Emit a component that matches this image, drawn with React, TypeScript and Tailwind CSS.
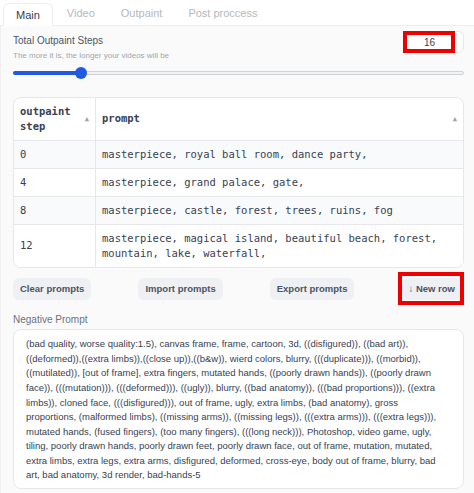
import React from 'react';

const rows: { step: string; prompt: string[] }[] = [
    { step: '0', prompt: ['masterpiece, royal ball room, dance party,'] },
    { step: '4', prompt: ['masterpiece, grand palace, gate,'] },
    { step: '8', prompt: ['masterpiece, castle, forest, trees, ruins, fog'] },
    {
        step: '12',
        prompt: ['masterpiece, magical island, beautiful beach, forest,', 'mountain, lake, waterfall,'],
    },
];

const negativeLines = [
    '(bad quality, worse quality:1.5), canvas frame, frame, cartoon, 3d, ((disfigured)), ((bad art)),',
    '((deformed)),((extra limbs)),((close up)),((b&w)), wierd colors, blurry, (((duplicate))), ((morbid)),',
    '((mutilated)), [out of frame], extra fingers, mutated hands, ((poorly drawn hands)), ((poorly drawn',
    'face)), (((mutation))), (((deformed))), ((ugly)), blurry, ((bad anatomy)), (((bad proportions))), ((extra',
    'limbs)), cloned face, (((disfigured))), out of frame, ugly, extra limbs, (bad anatomy), gross',
    'proportions, (malformed limbs), ((missing arms)), ((missing legs)), (((extra arms))), (((extra legs))),',
    'mutated hands, (fused fingers), (too many fingers), (((long neck))), Photoshop, video game, ugly,',
    'tiling, poorly drawn hands, poorly drawn feet, poorly drawn face, out of frame, mutation, mutated,',
    'extra limbs, extra legs, extra arms, disfigured, deformed, cross-eye, body out of frame, blurry, bad',
    'art, bad anatomy, 3d render, bad-hands-5',
];

const SortArrow = () => <span className="text-[7px] leading-none text-[#a3a3a3]">▲</span>;

const Button: React.FC<{ label: string; highlight?: boolean }> = ({ label, highlight }) => (
    <div className="relative">
        <button className="h-[22px] px-[7px] rounded-md bg-[#eef0f3] text-[9.5px] font-semibold text-[#4b5563] whitespace-nowrap">
            {label}
        </button>
        {highlight && (
            <div className="absolute -left-[4px] -right-[2px] -top-[3px] -bottom-[5px] border-[4px] border-[#ee0000] pointer-events-none" />
        )}
    </div>
);

export default function App() {
    return (
        <div className="w-[474px] h-[493px] overflow-hidden bg-white font-['Liberation_Sans',Arial,sans-serif]">
            {/* Tabs */}
            <div className="h-[26px] flex items-end pl-[3px] border-b border-[#eceef1]">
                <div className="h-[23px] px-[12px] flex items-center bg-white border border-b-0 border-[#eceef1] rounded-t-md text-[11px] text-[#374151] -mb-px">
                    Main
                </div>
                <div className="h-[23px] flex items-center text-[11px] text-[#b3b8c0] gap-[26px] pl-[14px]">
                    <span>Video</span>
                    <span>Outpaint</span>
                    <span>Post proccess</span>
                </div>
            </div>

            {/* Panel */}
            <div className="h-[467px] bg-[#fafafa] pl-[12px] pr-[10px] border-l border-[#f0f0f0]">
                <div className="flex justify-between pt-[5px]">
                    <div className="mt-[3px]">
                        <div className="text-[10px] leading-[14px] text-[#4b5563] font-medium">Total Outpaint Steps</div>
                        <div className="text-[8px] leading-[12px] mt-[2px] text-[#a1a6ae]">
                            The more it is, the longer your videos will be
                        </div>
                    </div>
                    <div className="relative w-[61px] h-[22px] rounded-md border border-[#e5e7eb] bg-white flex items-center pl-[20px] text-[10px] text-[#374151]">
                        16
                        <div className="absolute -left-[1px] -top-[1px] w-[52px] h-[22px] border-[4px] border-[#ee0000] pointer-events-none" />
                    </div>
                </div>

                {/* Slider */}
                <div className="relative h-[12px] mt-[5px] flex items-center">
                    <div className="w-full h-[4px] rounded-full bg-[#f1f2f4] border border-[#cfd3d8]" />
                    <div className="absolute left-0 w-[68px] h-[4px] rounded-full bg-[#1f5ae0]" />
                    <div className="absolute left-[62px] w-[12px] h-[12px] rounded-full bg-[#1f5ae0]" />
                </div>

                {/* Table */}
                <div className="mt-[18px] rounded-lg border border-[#e5e7eb] bg-white overflow-hidden font-['DejaVu_Sans_Mono',monospace] text-[10.5px] text-[#374151]">
                    <div className="flex h-[43px] border-b border-[#e5e7eb]">
                        <div className="w-[82px] shrink-0 border-r border-[#e5e7eb] pl-[6px] pr-[6px] flex items-center justify-between font-bold leading-[15px]">
                            <span>
                                outpaint
                                <br />
                                step
                            </span>
                            <SortArrow />
                        </div>
                        <div className="flex-1 pl-[6px] pr-[6px] flex items-center justify-between font-bold">
                            <span>prompt</span>
                            <SortArrow />
                        </div>
                    </div>
                    {rows.map((r, i) => (
                        <div
                            key={r.step}
                            className={`flex ${i % 2 === 0 ? 'bg-[#f9fafb]' : 'bg-white'} ${
                                i < rows.length - 1 ? 'border-b border-[#e5e7eb]' : ''
                            } ${r.prompt.length > 1 ? 'h-[42px]' : 'h-[28px]'}`}
                        >
                            <div className="w-[82px] shrink-0 border-r border-[#e5e7eb] pl-[6px] flex items-center">
                                {r.step}
                            </div>
                            <div className="flex-1 pl-[6px] flex flex-col justify-center leading-[15px] whitespace-nowrap">
                                {r.prompt.map((l) => (
                                    <span key={l}>{l}</span>
                                ))}
                            </div>
                        </div>
                    ))}
                </div>

                {/* Buttons */}
                <div className="flex justify-between mt-[7px] pr-[2px]">
                    <Button label="Clear prompts" />
                    <Button label="Import prompts" />
                    <Button label="Export prompts" />
                    <Button label="↓ New row" highlight />
                </div>

                {/* Negative prompt */}
                <div className="mt-[13px] text-[10px] leading-[14px] text-[#6b7280]">Negative Prompt</div>
                <div className="mt-[2px] h-[160px] rounded-lg border border-[#e5e7eb] bg-white pl-[12px] pt-[7px] text-[9.5px] leading-[14.6px] text-[#374151]">
                    {negativeLines.map((l) => (
                        <div key={l} className="whitespace-nowrap">
                            {l}
                        </div>
                    ))}
                </div>
            </div>
        </div>
    );
}
